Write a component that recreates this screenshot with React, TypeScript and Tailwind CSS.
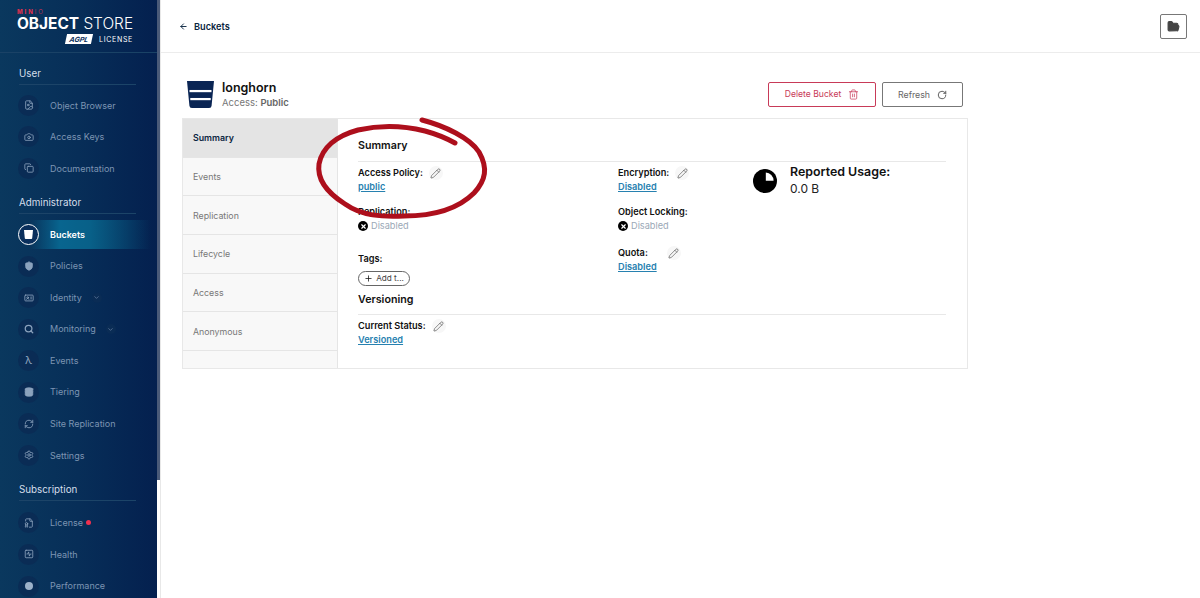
import {
  ArrowLeft,
  Camera,
  ChevronDown,
  Copy,
  Database,
  FileBadge,
  FileImage,
  FolderOpen,
  IdCard,
  Pencil,
  Plus,
  RotateCw,
  Search,
  Settings,
  Shield,
  SquareActivity,
  Trash2,
  RefreshCw,
  X,
} from 'lucide-react';
import type { ReactNode } from 'react';

function BucketIcon({ className }: { className?: string }) {
  return (
    <svg viewBox="0 0 28 28" className={className}>
      <path d="M0 0h28l-2.5 25.6a2.6 2.6 0 0 1-2.6 2.4H5.1a2.6 2.6 0 0 1-2.6-2.4z" fill="currentColor" />
      <rect x="2.6" y="9.3" width="22.8" height="2.3" fill="#fff" />
      <rect x="3.4" y="17.6" width="21.2" height="2.3" fill="#fff" />
    </svg>
  );
}

function NavItem({ icon, label, active, caret, dot }: { icon: ReactNode; label: string; active?: boolean; caret?: boolean; dot?: boolean }) {
  return (
    <div className="relative flex h-[31.55px] shrink-0 items-center pl-[18px]">
      {active && <div className="absolute left-[30px] right-[6px] top-[1px] bottom-[1px] bg-[linear-gradient(90deg,rgba(8,96,135,0)_0%,#08658f_25%,#086088_50%,rgba(8,80,120,0)_100%)]" />}
      <span
        className={
          active
            ? 'relative flex h-[21px] w-[21px] items-center justify-center rounded-full border border-white bg-[#0a2f5c] text-white'
            : 'relative flex h-[21px] w-[21px] items-center justify-center rounded-full bg-[#0a2c55] text-[#8ba2bd]'
        }
      >
        {icon}
      </span>
      <span className={active ? 'relative ml-[11px] text-[9px] font-semibold text-white' : 'relative ml-[11px] text-[9px] text-[#7d95b3]'}>{label}</span>
      {dot && <span className="relative ml-[3px] h-[5px] w-[5px] rounded-full bg-[#f0304f]" />}
      {caret && (
        <span className="relative ml-[10px] flex h-[10px] w-[10px] items-center justify-center rounded-full bg-[#0a2c55] text-[#7d95b3]">
          <ChevronDown size={7} />
        </span>
      )}
    </div>
  );
}

function SectionTitle({ children }: { children: ReactNode }) {
  return (
    <div className="ml-[19px] mr-[21px] flex h-[22px] shrink-0 items-center border-b border-[#1c4468] pt-[2px] text-[9.8px] text-[#d5dfeb]">
      {children}
    </div>
  );
}

function Sidebar() {
  return (
    <aside className="flex h-full w-[157px] shrink-0 flex-col bg-[linear-gradient(90deg,#0a385e_0%,#072e58_50%,#04204f_100%)]">
      <div className="flex h-[53px] shrink-0 flex-col border-b border-[#1a4266] pl-[17px] pt-[9px] leading-none text-white">
        <span className="h-[5px] text-[6px] leading-[5px] font-extrabold tracking-[1.9px] text-[#d9304f]">
          MIN<span className="font-light">IO</span>
        </span>
        <span className="mt-[2px] whitespace-nowrap text-[15.4px] leading-[16px]">
          <span className="font-bold">OBJECT</span> <span className="font-light">STORE</span>
        </span>
        <span className="mt-[2px] ml-[49px] flex items-center gap-[7px]">
          <span className="flex h-[10px] w-[26px] -skew-x-12 items-center justify-center bg-white text-[7px] font-bold italic text-[#0a2f5c]">AGPL</span>
          <span className="text-[7px] tracking-[0.7px]">LICENSE</span>
        </span>
      </div>
      <div className="h-[10px] shrink-0" />
      <SectionTitle>User</SectionTitle>
      <div className="h-[4.5px] shrink-0" />
      <NavItem icon={<FileImage size={10} />} label="Object Browser" />
      <NavItem icon={<Camera size={10} />} label="Access Keys" />
      <NavItem icon={<Copy size={10} />} label="Documentation" />
      <div className="h-[7.85px] shrink-0" />
      <SectionTitle>Administrator</SectionTitle>
      <div className="h-[4.75px] shrink-0" />
      <NavItem active icon={<BucketIcon className="h-[9px] w-[9px]" />} label="Buckets" />
      <NavItem icon={<Shield size={10} fill="currentColor" />} label="Policies" />
      <NavItem caret icon={<IdCard size={10} />} label="Identity" />
      <NavItem caret icon={<Search size={10} strokeWidth={3} />} label="Monitoring" />
      <NavItem icon={<span className="text-[11px] leading-none">λ</span>} label="Events" />
      <NavItem icon={<Database size={10} fill="currentColor" />} label="Tiering" />
      <NavItem icon={<RefreshCw size={10} />} label="Site Replication" />
      <NavItem icon={<Settings size={10} />} label="Settings" />
      <div className="h-[7.85px] shrink-0" />
      <SectionTitle>Subscription</SectionTitle>
      <div className="h-[6.2px] shrink-0" />
      <NavItem dot icon={<FileBadge size={10} />} label="License" />
      <NavItem icon={<SquareActivity size={10} />} label="Health" />
      <NavItem icon={<span className="h-[8px] w-[8px] rounded-full bg-[#9db1c9]" />} label="Performance" />
    </aside>
  );
}

function EditButton() {
  return (
    <span className="ml-[6px] flex h-[14px] w-[14px] items-center justify-center rounded-full bg-[#f7f7f7] text-[#333]">
      <Pencil size={11} strokeWidth={1.2} />
    </span>
  );
}

function Label({ children, edit }: { children: ReactNode; edit?: boolean }) {
  return (
    <div className="flex h-[14px] items-center text-[9.2px] font-semibold text-[#111]">
      <span>{children}</span>
      {edit && <EditButton />}
    </div>
  );
}

function LinkValue({ children }: { children: ReactNode }) {
  return <div className="flex h-[14px] items-center text-[9.2px] font-semibold text-[#2781b0] underline">{children}</div>;
}

function DisabledValue() {
  return (
    <div className="flex h-[14px] items-center gap-[3px] text-[9.2px] text-[#9aa8b6]">
      <span className="flex h-[10px] w-[10px] items-center justify-center rounded-full bg-black text-white">
        <X size={7} strokeWidth={4} />
      </span>
      Disabled
    </div>
  );
}

const tabs = ['Summary', 'Events', 'Replication', 'Lifecycle', 'Access', 'Anonymous'];

function Tabs() {
  return (
    <div className="w-[155px] shrink-0 border-r border-[#e5e5e5] bg-[#f8f8f8]">
      {tabs.map((t, i) => (
        <div
          key={t}
          className={
            i === 0
              ? 'flex h-[38.7px] items-center border-b border-[#e5e5e5] bg-[#e4e4e4] pb-[1px] pl-[10px] text-[8.8px] font-semibold text-[#0a2440]'
              : 'flex h-[38.7px] items-center border-b border-[#e5e5e5] pl-[10px] text-[8.8px] text-[#777]'
          }
        >
          {t}
        </div>
      ))}
    </div>
  );
}

function Summary() {
  return (
    <div className="flex-1 pl-[20px] pr-[21px]">
      <div className="flex h-[43px] items-end border-b border-[#e8e8e8] pb-[7px] text-[10.7px] font-semibold text-[#111]">Summary</div>
      <div className="flex h-[132px] pt-[4px]">
        <div className="flex w-[260px] flex-col">
          <Label edit>Access Policy:</Label>
          <LinkValue>public</LinkValue>
          <div className="h-[11px]" />
          <Label>Replication:</Label>
          <DisabledValue />
          <div className="h-[19px]" />
          <Label>Tags:</Label>
          <div className="mt-[5px] flex h-[15px] w-[52px] items-center justify-center gap-[3px] rounded-full border border-[#666] text-[8.2px] text-[#444]">
            <Plus size={9} strokeWidth={2} className="text-[#111]" />
            Add t...
          </div>
        </div>
        <div className="flex w-[135px] flex-col">
          <Label edit>Encryption:</Label>
          <LinkValue>Disabled</LinkValue>
          <div className="h-[11px]" />
          <Label>Object Locking:</Label>
          <DisabledValue />
          <div className="h-[13px]" />
          <Label edit>
            <span className="mr-[13px]">Quota:</span>
          </Label>
          <LinkValue>Disabled</LinkValue>
        </div>
        <div className="flex items-start pt-[3px]">
          <svg viewBox="0 0 24 24" className="h-[24px] w-[24px] shrink-0">
            <circle cx="12" cy="12" r="12" fill="#000" />
            <path d="M12.8 3.4a8.6 8.6 0 0 1 7.8 8.4h-7.8z" fill="#fff" />
          </svg>
          <div className="-mt-[6px] ml-[13px]">
            <div className="text-[12.4px] font-semibold leading-[17px] text-[#111]">Reported Usage:</div>
            <div className="mt-[1px] text-[12px] leading-[15px] text-[#222]">0.0 B</div>
          </div>
        </div>
      </div>
      <div className="flex h-[21px] items-end border-b border-[#e8e8e8] pb-[8px] text-[10.7px] font-semibold leading-none text-[#111]">Versioning</div>
      <div className="pt-[4px]">
        <Label edit>Current Status:</Label>
        <LinkValue>Versioned</LinkValue>
      </div>
    </div>
  );
}

export default function App() {
  return (
    <div className="relative flex h-[598px] w-[1200px] overflow-hidden bg-white font-['Inter',sans-serif]">
      <Sidebar />
      <div className="h-full w-[4px] shrink-0 border-r border-[#e8e8e8]">
        <div className="h-[480px] w-[3px] bg-[#4a5a78]" />
      </div>
      <main className="min-w-0 flex-1">
        <header className="flex h-[53px] items-center justify-between border-b border-[#ececec] pl-[18px] pr-[13px]">
          <div className="flex items-center gap-[6px] pt-[1px] text-[9.2px] font-semibold text-[#0a2440]">
            <ArrowLeft size={9} strokeWidth={2.5} />
            Buckets
          </div>
          <div className="flex h-[25px] w-[27px] items-center justify-center rounded-[2px] border border-[#777]">
            <FolderOpen size={13} fill="#444" className="text-[#444]" />
          </div>
        </header>
        <div className="ml-[21px] w-[786px]">
          <div className="flex h-[65px] items-center justify-between pl-[5px] pr-[5px] pt-[18px]">
            <div className="flex items-center gap-[8px]">
              <BucketIcon className="h-[27px] w-[27px] text-[#0a2554]" />
              <div>
                <div className="text-[12.5px] font-semibold leading-[15px] text-[#111]">longhorn</div>
                <div className="mt-[1px] text-[9.5px] leading-[13px] text-[#777]">
                  Access: <span className="font-semibold text-[#666]">Public</span>
                </div>
              </div>
            </div>
            <div className="flex items-center gap-[6px]">
              <div className="flex h-[25px] w-[108px] items-center justify-center gap-[7px] rounded-[2px] border border-[#c83a58] text-[8.6px] text-[#c83a58]">
                Delete Bucket
                <Trash2 size={11} strokeWidth={1.6} />
              </div>
              <div className="flex h-[25px] w-[81px] items-center justify-center gap-[7px] rounded-[2px] border border-[#777] text-[8.8px] text-[#666]">
                Refresh
                <RotateCw size={10} className="text-[#444]" />
              </div>
            </div>
          </div>
          <div className="flex h-[251px] border border-[#e8e8e8]">
            <Tabs />
            <Summary />
          </div>
        </div>
      </main>
      <svg viewBox="0 0 1200 598" className="pointer-events-none absolute inset-0 h-[598px] w-[1200px]">
        <path
          d="M422 120C445 126 470 138 479 152C488 168 486 180 474 193C460 207 436 216 404 216C382 217 362 216 345 204C326 192 317 178 319 164C322 148 336 136 358 130C380 125 405 126 425 131C436 134 446 138 455 143"
          fill="none"
          stroke="#ad0f1c"
          strokeWidth="5"
          strokeLinecap="round"
        />
      </svg>
    </div>
  );
}
